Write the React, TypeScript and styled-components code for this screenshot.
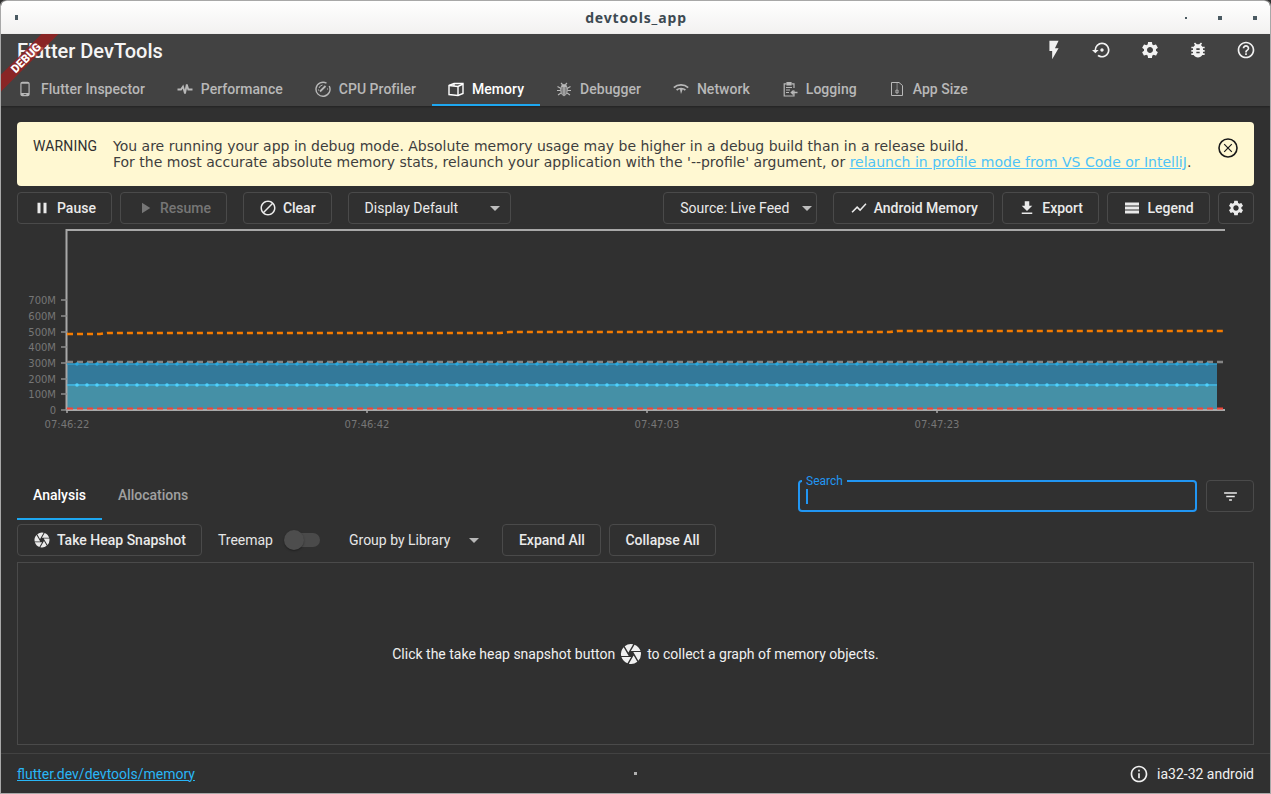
import React from 'react';
import styled, { createGlobalStyle } from 'styled-components';
import {
  MdPhoneAndroid, MdFlashOn, MdSettings, MdBugReport, MdHelpOutline, MdPause, MdPlayArrow, MdBlock,
  MdArrowDropDown, MdShowChart, MdFileDownload, MdCamera, MdInfoOutline,
  MdSettingsBackupRestore, MdFilterList,
} from 'react-icons/md';

const Global = createGlobalStyle`
  html, body { margin: 0; padding: 0; background: #303030; }
  * { box-sizing: border-box; }
`;

const Window = styled.div`
  width: 100vw; height: 100vh; display: flex; flex-direction: column; overflow: hidden;
  background: #303030; border: 1px solid #a8a8a8; border-top: 0; border-radius: 6px 6px 0 0;
  font-family: Roboto, "Liberation Sans", sans-serif; color: #e6e6e6; font-size: 14px;
`;
const TitleBar = styled.div`
  height: 34px; flex: none; display: grid; grid-template-columns: 1fr auto 1fr; align-items: center;
  background: linear-gradient(#ffffff, #f2f1f0); border-top: 1px solid #a8a8a8; border-radius: 6px 6px 0 0;
  padding: 0 13px 0 14px;
`;
const Title = styled.div`
  font-family: "Noto Sans", "DejaVu Sans", sans-serif; font-weight: 700; font-size: 14px; color: #3d4a52;
  letter-spacing: 0.85px;
`;
const Pin = styled.span<{ $w?: number; $h?: number }>`
  display: block; width: ${p => p.$w ?? 3}px; height: ${p => p.$h ?? 3}px; background: #4a5a62;
`;
const Controls = styled.div`
  display: flex; gap: 31px; align-items: center; height: 6px; justify-self: end; margin-top: 1px;
`;
const AppBar = styled.header`
  position: relative; height: 72px; flex: none; background: #424242; overflow: hidden;
  box-shadow: 0 1px 2px rgba(0,0,0,.3); z-index: 1;
`;
const TopRow = styled.div`
  height: 34px; padding: 0 16px; display: flex; align-items: center; justify-content: space-between;
`;
const AppTitle = styled.div`
  font-size: 20px; font-weight: 500; color: #f5f5f5;
`;
const Actions = styled.div`
  display: flex; align-items: center; gap: 28px; margin-right: -2px; margin-top: -2px; color: #f2f2f2;
  svg { display: block; }
`;
const Bolt = styled(MdFlashOn)`
  margin: 0 -1px;
`;
const Ribbon = styled.div`
  position: absolute; left: -30px; top: 18px; width: 110px; height: 12px; transform: rotate(-45deg);
  background: rgba(155, 30, 30, 0.8); color: #fff; text-align: center; font-size: 11.5px; line-height: 12px;
  font-weight: 900;
`;
const NavTabs = styled.nav`
  height: 38px; display: flex;
`;
const NavTab = styled.div<{ $active?: boolean }>`
  display: flex; align-items: center; gap: 8px; padding: 6px 16px 0; height: 38px; font-weight: 500;
  letter-spacing: 0.03px;
  color: ${p => (p.$active ? '#ffffff' : '#b8b8b8')};
  border-bottom: 2px solid ${p => (p.$active ? '#1ea7f0' : 'transparent')};
  svg { display: block; flex: none; }
`;
const Main = styled.main`
  flex: 1; min-height: 0; display: flex; flex-direction: column; padding: 16px 16px 8px;
`;
const Banner = styled.div`
  height: 64px; flex: none; background: #fff8d2; border-radius: 4px; display: flex; align-items: center;
  padding: 0 16px; color: #303030;
`;
const BannerLabel = styled.div`
  width: 80px; flex: none; font-size: 14px; margin-top: -17px; letter-spacing: 0.15px;
`;
const BannerText = styled.div`
  flex: 1; font-family: "DejaVu Sans", sans-serif; font-size: 14px; line-height: 16px; color: #3e3e3e;
  a { color: #4fc3f7; text-decoration: underline; }
`;
const CloseBtn = styled.div`
  color: #1a1a1a; margin-right: -2px; margin-top: -12px; svg { display: block; }
`;
const Toolbar = styled.div`
  margin-top: 6px; height: 32px; flex: none; display: flex; align-items: center;
`;
const Button = styled.div<{ $disabled?: boolean; $width?: number; $left?: number }>`
  height: 32px; display: flex; align-items: center; justify-content: center; gap: 6px; padding: 0 15px;
  border: 1px solid #4a4a4a; border-radius: 4px; font-weight: 500; flex: none; white-space: nowrap;
  color: ${p => (p.$disabled ? '#767676' : '#eaeaea')};
  ${p => (p.$width ? `width: ${p.$width}px; padding: 0;` : '')}
  margin-left: ${p => p.$left ?? 0}px;
  svg { display: block; flex: none; }
`;
const Dropdown = styled(Button)`
  justify-content: space-between; padding: 0 3px 0 16px; font-weight: 400;
  svg { color: #bdbdbd; }
`;
const Spacer = styled.div`
  flex: 1;
`;
const Chart = styled.svg`
  display: block; width: 1237px; height: 240px; flex: none;
`;
const TabRow = styled.div`
  height: 56px; flex: none; display: flex; justify-content: space-between;
`;
const SubTabs = styled.div`
  display: flex; align-self: flex-end;
`;
const SubTab = styled.div<{ $active?: boolean }>`
  height: 48px; padding: 0 16px; display: flex; align-items: center; font-weight: 500;
  color: ${p => (p.$active ? '#fff' : '#a0a0a0')};
  border-bottom: 2px solid ${p => (p.$active ? '#1ea7f0' : 'transparent')};
`;
const SearchWrap = styled.div`
  display: flex; gap: 9px; margin-top: 16px; height: 32px;
`;
const SearchBox = styled.div`
  position: relative; width: 399px; height: 32px; border: 2px solid #2196f3; border-radius: 4px;
`;
const SearchLabel = styled.span`
  position: absolute; left: 2px; top: -8px; padding: 0 4px; background: #303030; color: #2196f3;
  font-size: 12px; line-height: 14px;
`;
const Caret = styled.span`
  position: absolute; left: 6px; top: 7px; width: 2px; height: 15px; background: #2196f3;
`;
const FilterBtn = styled(Button)`
  height: 32px; width: 48px; padding: 0;
`;
const ActionRow = styled.div`
  margin-top: 4px; height: 32px; flex: none; display: flex; align-items: center;
`;
const Label = styled.span<{ $left?: number }>`
  margin-left: ${p => p.$left ?? 0}px; color: #e6e6e6;
`;
const Switch = styled.div`
  position: relative; width: 35px; height: 14px; background: #4a4a4a; border-radius: 7px; margin-left: 12px;
`;
const Knob = styled.span`
  position: absolute; left: -1px; top: -3px; width: 20px; height: 20px; border-radius: 50%; background: #4d4d4d;
  box-shadow: 0 1px 2px rgba(0,0,0,.35);
`;
const GroupArrow = styled(MdArrowDropDown)`
  margin-left: 12px; margin-right: 16px; color: #b8b8b8; flex: none;
`;
const Panel = styled.div`
  margin-top: 6px; flex: 1; min-height: 0; border: 1px solid #4a4a4a; display: flex; align-items: center;
  justify-content: center; gap: 4px; color: #f0f0f0; padding-top: 1px;
  svg { display: block; }
`;
const Footer = styled.footer`
  height: 40px; flex: none; border-top: 1px solid #424242; padding: 0 16px; display: grid;
  grid-template-columns: 1fr auto 1fr; align-items: center;
`;
const FooterLink = styled.a`
  color: #29b6f6; text-decoration: underline; font-size: 14px;
`;
const Dot = styled.span`
  width: 3px; height: 3px; background: #b0b0b0; display: block;
`;
const FooterInfo = styled.div`
  display: flex; justify-content: flex-end; align-items: center; gap: 8px; color: #f0f0f0;
  svg { display: block; }
`;

const PerfIcon = () => (
  <svg width="16" height="16" viewBox="0 0 16 16" fill="none" stroke="currentColor" strokeWidth="1.8">
    <path d="M0.5 8.5H4L6 5.5L8 12.5L9.8 3.5L11.3 8.5H15.5" />
  </svg>
);
const CpuIcon = () => (
  <svg width="16" height="16" viewBox="0 0 16 16" fill="none" stroke="currentColor" strokeWidth="1.4">
    <path d="M11.5 2.2A7 7 0 1 0 14.2 5" />
    <path d="M5 10.5L10.5 5" strokeWidth="1.8" />
    <path d="M4 7A4.5 4.5 0 0 1 7.5 4M12.5 7.5V8.5M3.5 8.5V9.5" strokeWidth="1" />
  </svg>
);
const BoxIcon = () => (
  <svg width="16" height="16" viewBox="0 0 16 16" fill="none" stroke="currentColor" strokeWidth="1.4">
    <path d="M1 4.5L6 2.5H15L15 12.5L10 14.5L1 13.5Z" />
    <path d="M1 4.5L10 5.5L15 3M10 5.5V14.5M6 2.5L6 5" />
  </svg>
);
const BugIcon = () => (
  <svg width="16" height="16" viewBox="0 0 16 16" fill="none" stroke="currentColor">
    <path d="M5.3 5.5H10.7L11.5 9L10.5 13L8 15L5.5 13L4.5 9Z" fill="currentColor" fillOpacity=".55" strokeWidth=".8" />
    <path d="M5.5 5.5L6 3.5H10L10.5 5.5Z" fill="currentColor" strokeWidth=".6" />
    <path d="M5 2L6.5 3.5M11 2L9.5 3.5M1.5 5.5L5 7.5M14.5 5.5L11 7.5M1 9.5H4.5M15 9.5H11.5M2 14L5 12M14 14L11 12M8 6V14" strokeWidth="1.1" />
  </svg>
);
const WifiIcon = () => (
  <svg width="16" height="16" viewBox="0 0 16 16" fill="none" stroke="currentColor" strokeWidth="1.7">
    <path d="M0.8 6.6C4.8 3 11.2 3 15.2 6.6" />
    <path d="M3.6 9C6 7 10 7 12.4 9" />
    <path d="M6.8 7.5H10L8 13Z" fill="currentColor" stroke="none" />
  </svg>
);
const ClipboardIcon = () => (
  <svg width="16" height="16" viewBox="0 0 16 16" fill="none" stroke="currentColor" strokeWidth="1.2">
    <path d="M4.5 2.8H2.2V15H12V9.5M9.5 2.8H12V7" />
    <path d="M5 1.5H9V4H5Z" fill="currentColor" />
    <path d="M4 6.5H10M4 9H8M4 11.5H7" />
    <path d="M15.5 11.5H9.5M11.5 9.5L9.3 11.5L11.5 13.5" strokeWidth="1.3" />
  </svg>
);
const ZipIcon = () => (
  <svg width="16" height="16" viewBox="0 0 16 16" fill="none" stroke="currentColor" strokeWidth="1">
    <path d="M2.5 1.5H10L13.5 4.5V14.5H2.5Z" />
    <path d="M7.5 3H8.7M7.5 5H8.7M7.5 7H8.7M7 9H9V12H7Z" />
  </svg>
);
const CloseRing = () => (
  <svg width="24" height="24" viewBox="0 0 24 24" fill="none" stroke="currentColor">
    <circle cx="12" cy="12" r="9" strokeWidth="1.6" />
    <path d="M8.2 8.2L15.8 15.8M15.8 8.2L8.2 15.8" strokeWidth="1.2" />
  </svg>
);
const LegendIcon = () => (
  <svg width="18" height="18" viewBox="0 0 18 18" fill="currentColor">
    <rect x="2" y="3.5" width="14" height="3" />
    <rect x="2" y="7.5" width="14" height="3" />
    <rect x="2" y="11.5" width="14" height="3" />
  </svg>
);

const tabs = [
  { label: 'Flutter Inspector', icon: <MdPhoneAndroid size={16} /> },
  { label: 'Performance', icon: <PerfIcon /> },
  { label: 'CPU Profiler', icon: <CpuIcon /> },
  { label: 'Memory', icon: <BoxIcon />, active: true },
  { label: 'Debugger', icon: <BugIcon /> },
  { label: 'Network', icon: <WifiIcon /> },
  { label: 'Logging', icon: <ClipboardIcon /> },
  { label: 'App Size', icon: <ZipIcon /> },
];

const yTicks: [string, number][] = [
  ['700M', 300], ['600M', 316], ['500M', 332], ['400M', 347], ['300M', 363], ['200M', 379], ['100M', 394], ['0', 410],
];
const xTicks: [string, number, number][] = [
  ['07:46:22', 67, 67], ['07:46:42', 367, 367], ['07:47:03', 647, 657], ['07:47:23', 937, 937],
];
const dots = Array.from({ length: 114 }, (_, i) => 77 + i * 10);

const MemoryChart = () => (
  <Chart viewBox="17 224 1237 240">
    <rect x="67" y="364" width="1150" height="22" fill="#33799a" />
    <rect x="67" y="386" width="1150" height="23" fill="#4590a6" />
    <path d="M66.5 410V230H1225" stroke="#a8a8a8" strokeWidth="2" fill="none" />
    <path d="M66 410H1225" stroke="#a8a8a8" strokeWidth="2" />
    <path d="M67 362H1223" stroke="#858585" strokeWidth="2.5" strokeDasharray="6 4" />
    <path d="M67 334H100L107 333H500L510 332H890L898 331H1223" stroke="#f57c00" strokeWidth="2.6" strokeDasharray="6 4" fill="none" />
    <path d="M67 364H1217" stroke="#2f9fd0" strokeWidth="1.5" />
    <path d="M67 385H1217" stroke="#47bfe8" strokeWidth="1.5" />
    <path d="M67 408.5H1223" stroke="#f44336" strokeWidth="2" strokeDasharray="6 4" />
    {dots.map(d => (
      <g key={d}>
        <circle cx={d} cy="364" r="1.8" fill="#2aa8de" />
        <circle cx={d} cy="385" r="1.8" fill="#4fd0fb" />
      </g>
    ))}
    {yTicks.map(([t, y]) => (
      <g key={t}>
        <line x1="61" x2="67" y1={y} y2={y} stroke="#8c8c8c" strokeWidth="1.5" />
        <text x="56" y={y + 4} textAnchor="end" fontFamily="DejaVu Sans" fontSize="10" fill="#767676">{t}</text>
      </g>
    ))}
    {xTicks.map(([t, tx, lx]) => (
      <g key={t}>
        <line x1={tx} x2={tx} y1="410" y2="413" stroke="#a8a8a8" strokeWidth="1.5" />
        <text x={lx} y="428" textAnchor="middle" fontFamily="DejaVu Sans" fontSize="10" fill="#767676">{t}</text>
      </g>
    ))}
  </Chart>
);

export default function App() {
  return (
    <Window>
      <Global />
      <TitleBar>
        <Pin $w={3} $h={5} />
        <Title>devtools_app</Title>
        <Controls>
          <Pin $w={2} $h={2} />
          <Pin $w={4} $h={4} />
          <Pin $w={4} $h={4} />
        </Controls>
      </TitleBar>
      <AppBar>
        <TopRow>
          <AppTitle>Flutter DevTools</AppTitle>
          <Actions>
            <Bolt size={22} />
            <MdSettingsBackupRestore size={20} />
            <MdSettings size={20} />
            <MdBugReport size={20} />
            <MdHelpOutline size={20} />
          </Actions>
        </TopRow>
        <NavTabs>
          {tabs.map(t => (
            <NavTab key={t.label} $active={t.active}>{t.icon}{t.label}</NavTab>
          ))}
        </NavTabs>
        <Ribbon>DEBUG</Ribbon>
      </AppBar>
      <Main>
        <Banner>
          <BannerLabel>WARNING</BannerLabel>
          <BannerText>
            You are running your app in debug mode. Absolute memory usage may be higher in a debug build than in a release build.<br />
            For the most accurate absolute memory stats, relaunch your application with the '--profile' argument, or <a>relaunch in profile mode from VS Code or IntelliJ</a>.
          </BannerText>
          <CloseBtn><CloseRing /></CloseBtn>
        </Banner>
        <Toolbar>
          <Button><MdPause size={18} />Pause</Button>
          <Button $disabled $left={8}><MdPlayArrow size={18} />Resume</Button>
          <Button $left={16}><MdBlock size={18} />Clear</Button>
          <Dropdown $left={16} $width={163}>Display Default<MdArrowDropDown size={24} /></Dropdown>
          <Spacer />
          <Dropdown $width={154}>Source: Live Feed<MdArrowDropDown size={24} /></Dropdown>
          <Button $left={16} $width={161}><MdShowChart size={18} />Android Memory</Button>
          <Button $left={8}><MdFileDownload size={18} />Export</Button>
          <Button $left={8} $width={103}><LegendIcon />Legend</Button>
          <Button $left={8} $width={36}><MdSettings size={18} /></Button>
        </Toolbar>
        <MemoryChart />
        <TabRow>
          <SubTabs>
            <SubTab $active>Analysis</SubTab>
            <SubTab>Allocations</SubTab>
          </SubTabs>
          <SearchWrap>
            <SearchBox>
              <SearchLabel>Search</SearchLabel>
              <Caret />
            </SearchBox>
            <FilterBtn><MdFilterList size={17} /></FilterBtn>
          </SearchWrap>
        </TabRow>
        <ActionRow>
          <Button><MdCamera size={18} />Take Heap Snapshot</Button>
          <Label $left={16}>Treemap</Label>
          <Switch><Knob /></Switch>
          <Label $left={29}>Group by Library</Label>
          <GroupArrow size={24} />
          <Button $width={99}>Expand All</Button>
          <Button $left={8}>Collapse All</Button>
        </ActionRow>
        <Panel>
          Click the take heap snapshot button <MdCamera size={24} /> to collect a graph of memory objects.
        </Panel>
      </Main>
      <Footer>
        <div><FooterLink>flutter.dev/devtools/memory</FooterLink></div>
        <Dot />
        <FooterInfo><MdInfoOutline size={20} />ia32-32 android</FooterInfo>
      </Footer>
    </Window>
  );
}
